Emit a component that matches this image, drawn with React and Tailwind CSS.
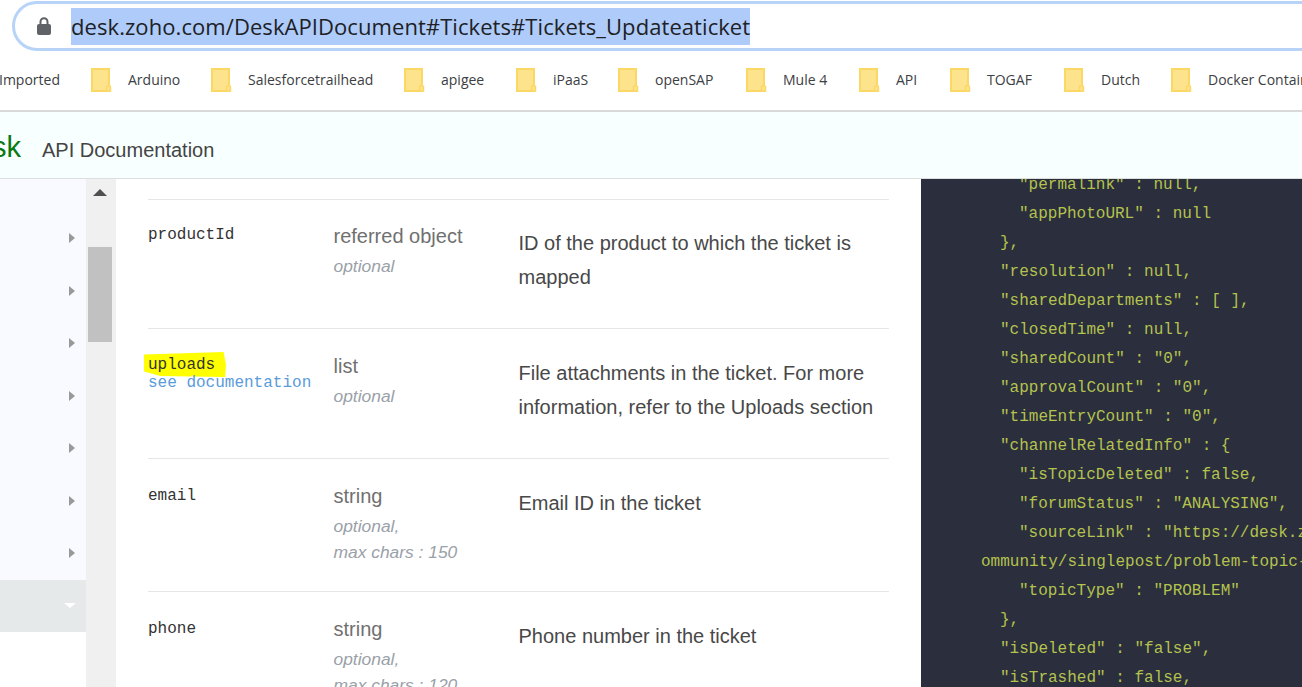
const BOOKMARKS = [
  ['Arduino', 'w-[120px]'],
  ['Salesforcetrailhead', 'w-[193px]'],
  ['apigee', 'w-[112px]'],
  ['iPaaS', 'w-[102px]'],
  ['openSAP', 'w-[128px]'],
  ['Mule 4', 'w-[113px]'],
  ['API', 'w-[91px]'],
  ['TOGAF', 'w-[114px]'],
  ['Dutch', 'w-[107px]'],
  ['Docker Containers', 'w-[160px]'],
]

const NAV_COUNT = 7

const CODE_LINES = [
  ['pl-[98px]', '"permalink" : null,'],
  ['pl-[98px]', '"appPhotoURL" : null'],
  ['pl-[79px]', '},'],
  ['pl-[79px]', '"resolution" : null,'],
  ['pl-[79px]', '"sharedDepartments" : [ ],'],
  ['pl-[79px]', '"closedTime" : null,'],
  ['pl-[79px]', '"sharedCount" : "0",'],
  ['pl-[79px]', '"approvalCount" : "0",'],
  ['pl-[79px]', '"timeEntryCount" : "0",'],
  ['pl-[79px]', '"channelRelatedInfo" : {'],
  ['pl-[98px]', '"isTopicDeleted" : false,'],
  ['pl-[98px]', '"forumStatus" : "ANALYSING",'],
  ['pl-[98px]', '"sourceLink" : "https://desk.zoho.com/portal/community/singlepost/problem-topic-1"'],
  ['pl-[60px]', 'ommunity/singlepost/problem-topic-1",'],
  ['pl-[98px]', '"topicType" : "PROBLEM"'],
  ['pl-[79px]', '},'],
  ['pl-[79px]', '"isDeleted" : "false",'],
  ['pl-[79px]', '"isTrashed" : false,'],
]

function FolderIcon() {
  return (
    <svg width="21" height="24" viewBox="0 0 21 24" className="shrink-0">
      <path d="M1 1h17v22H1z" fill="#fee38d" stroke="#fbd765" strokeWidth="2" />
      <path d="M15.5 19.5a2 2 0 0 1 4 0V23h-4z" fill="#fee38d" stroke="#fbd765" strokeWidth="1.5" />
    </svg>
  )
}

function Row({ name, link, highlight, type, notes, children, className, nameTop = 'pt-[27px]', typeTop = 'pt-[24px]', textTop = 'pt-[27px]' }) {
  return (
    <div className={`flex border-t border-[#e6e6e6] ${className}`}>
      <div className={`w-[185.5px] shrink-0 relative font-['Liberation_Mono',monospace] text-[16px] leading-[18px] text-[#333] ${nameTop}`}>
        {highlight && (
          <span className="absolute left-[-4px] top-[23px] w-[82px] h-[25px] bg-[#ffff00] [clip-path:polygon(0_10%,97%_0,100%_50%,99%_100%,20%_96%,0_78%)]" />
        )}
        <div className="relative">{name}</div>
        {link && <div className="relative text-[#5a9bdc]">{link}</div>}
      </div>
      <div className={`w-[185px] shrink-0 ${typeTop}`}>
        <div className="text-[20px] leading-[26px] text-[#707070]">{type}</div>
        <div className="text-[17.4px] leading-[26px] italic text-[#9aa1a8] mt-[4px]">
          {notes.map(n => <div key={n}>{n}</div>)}
        </div>
      </div>
      <div className={`flex-1 text-[20px] leading-[34px] text-[#484848] ${textTop}`}>{children}</div>
    </div>
  )
}

export default function App() {
  return (
    <div className="h-[687px] w-[1302px] overflow-hidden flex flex-col bg-white font-['Liberation_Sans',Arial,sans-serif]">
      {/* Browser address bar */}
      <div className="h-[52px] shrink-0 pl-[12px] pt-[1px]">
        <div className="h-[50px] -mr-[40px] flex items-center border-[3px] border-[#b7d3f8] rounded-l-[25px] pl-[22px] bg-white">
          <svg width="14" height="18" viewBox="0 0 14 18" className="shrink-0">
            <path d="M3.5 8V4.8a3.5 3.5 0 0 1 7 0V8" fill="none" stroke="#5f6368" strokeWidth="2" />
            <rect x="0" y="7" width="14" height="11" rx="2" fill="#5f6368" />
          </svg>
          <span className="ml-[20px] h-[37px] leading-[37px] bg-[#aecbfa] text-[#202124] text-[22px] whitespace-nowrap font-['Open_Sans',sans-serif] tracking-[0.07px]">
            desk.zoho.com/DeskAPIDocument#Tickets#Tickets_Updateaticket
          </span>
        </div>
      </div>

      {/* Bookmarks */}
      <div className="h-[60px] shrink-0 flex items-center pb-[3px] border-b-2 border-[#d9d9d9] whitespace-nowrap overflow-hidden text-[14px] text-[#3c4043] font-['Open_Sans',sans-serif]">
        <span className="mr-[31px] -ml-[1px]">Imported</span>
        {BOOKMARKS.map(([label, width]) => (
          <div key={label} className={`flex items-center gap-[16px] shrink-0 ${width}`}>
            <FolderIcon />
            <span>{label}</span>
          </div>
        ))}
      </div>

      {/* Product header */}
      <div className="h-[67px] shrink-0 flex items-center pt-[9px] bg-[#f8ffff] border-b border-[#dcdfe0] overflow-hidden">
        <span className="w-[21px] shrink-0 flex justify-end text-[29px] leading-none text-[#0b7a12] mb-[5px]">sk</span>
        <span className="ml-[21px] text-[20px] text-[#444]">API Documentation</span>
      </div>

      <div className="flex-1 min-h-0 flex">
        {/* Sidebar */}
        <div className="w-[86px] shrink-0 flex flex-col bg-white">
          <div className="bg-[#f8faff] pt-[33px]">
            {Array.from({ length: NAV_COUNT }, (_, i) => (
              <div key={i} className="h-[52.5px] flex items-center justify-end pr-[11px]">
                <span className="border-y-[5px] border-y-transparent border-l-[6px] border-l-[#999]" />
              </div>
            ))}
          </div>
          <div className="h-[52px] bg-[#e6e9ea] flex items-center justify-end pr-[10px]">
            <span className="border-x-[6px] border-x-transparent border-t-[5px] border-t-white" />
          </div>
        </div>

        {/* Scrollbar */}
        <div className="w-[30px] shrink-0 bg-[#f0f0f0] flex flex-col items-center pt-[10px] pr-[2px]">
          <span className="border-x-[7px] border-x-transparent border-b-[7px] border-b-[#505050]" />
          <div className="w-[24px] h-[95px] bg-[#c1c1c1] mt-[51px]" />
        </div>

        {/* Parameter table */}
        <div className="w-[805px] shrink-0 pl-[32px] pr-[32px] pt-[20px]">
          <Row name="productId" type="referred object" notes={['optional']} className="h-[129px]" nameTop="pt-[26px]" typeTop="pt-[23px]" textTop="pt-[26px]">
            ID of the product to which the ticket is mapped
          </Row>
          <Row name="uploads" link="see documentation" highlight type="list" notes={['optional']} className="h-[130px]">
            File attachments in the ticket. For more information, refer to the Uploads section
          </Row>
          <Row name="email" type="string" notes={['optional,', 'max chars : 150']} className="h-[133px]" nameTop="pt-[28px]">
            Email ID in the ticket
          </Row>
          <Row name="phone" type="string" notes={['optional,', 'max chars : 120']} className="h-[133px]" nameTop="pt-[28px]">
            Phone number in the ticket
          </Row>
        </div>

        {/* Response sample */}
        <div className="flex-1 min-w-0 overflow-hidden bg-[#2a2e3d] font-['Liberation_Mono',monospace] text-[16px] leading-[29px] text-[#b4c24e] whitespace-pre">
          <div className="-mt-[8px]">
            {CODE_LINES.map(([indent, text], i) => (
              <div key={i} className={indent}>{text}</div>
            ))}
          </div>
        </div>
      </div>
    </div>
  )
}
